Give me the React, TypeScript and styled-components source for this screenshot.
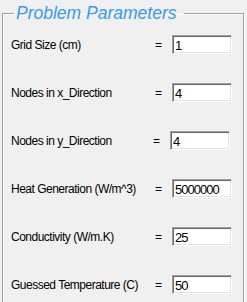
import styled, { createGlobalStyle } from 'styled-components';

const GlobalStyle = createGlobalStyle`
  html, body {
    margin: 0;
    padding: 0;
    background: #f0f0f0;
    overflow: hidden;
  }

  body {
    font-family: "Liberation Sans", Arial, sans-serif;
  }
`;

interface Param {
  label: string;
  value: string;
  shift?: number;
}

const PARAMS: Param[] = [
  { label: 'Grid Size (cm)', value: '1' },
  { label: 'Nodes in x_Direction', value: '4' },
  { label: 'Nodes in y_Direction', value: '4', shift: -2 },
  { label: 'Heat Generation (W/m^3)', value: '5000000' },
  { label: 'Conductivity (W/m.K)', value: '25' },
  { label: 'Guessed Temperature (C)', value: '50' },
];

const App = () => {
  return (
    <>
      <GlobalStyle />
      <GroupBox>
        <Title>{'Problem Parameters'}</Title>
        <ParamList>
          {PARAMS.map((param) => (
            <ParamRow key={param.label}>
              <ParamLabel>{param.label}</ParamLabel>
              <Equals shift={param.shift || 0}>{'='}</Equals>
              <ParamInput defaultValue={param.value} />
            </ParamRow>
          ))}
        </ParamList>
      </GroupBox>
    </>
  );
};

export default App;


const GroupBox = styled.fieldset`
  box-sizing: border-box;
  width: 242px;
  height: 306px;
  margin: 0 0 0 2px;
  padding: 9px 0 0 8px;
  border: 1px solid #a0a0a0;
  box-shadow: inset 1px 1px 0 #ffffff, 1px 1px 0 #ffffff;
  min-inline-size: 0;
`;

const Title = styled.legend`
  margin-left: 3px;
  padding: 0 8px 0 2px;
  font-style: italic;
  font-size: 17.5px;
  line-height: 26px;
  color: #3399ff;
`;

const ParamList = styled.div`
  display: flex;
  flex-direction: column;
  gap: 29px;
`;

const ParamRow = styled.div`
  display: flex;
  align-items: center;
  height: 19px;
`;

const ParamLabel = styled.span`
  width: 144px;
  font-size: 12px;
  letter-spacing: -0.5px;
  color: #000000;
  white-space: nowrap;
`;

const Equals = styled.span<{ shift: number }>`
  width: 17px;
  margin-left: ${(props) => props.shift}px;
  font-size: 12px;
  color: #000000;
`;

const ParamInput = styled.input`
  box-sizing: border-box;
  width: 60px;
  height: 19px;
  margin: 0;
  padding: 1px 0 0 2px;
  border: 1px solid;
  border-color: #a0a0a0 #ffffff #ffffff #a0a0a0;
  box-shadow: inset 1px 1px 0 #696969, inset -1px -1px 0 #e3e3e3;
  background: #ffffff;
  font-family: "Liberation Sans", Arial, sans-serif;
  font-size: 13px;
  letter-spacing: -1px;
  color: #000000;
  outline: none;
`;
